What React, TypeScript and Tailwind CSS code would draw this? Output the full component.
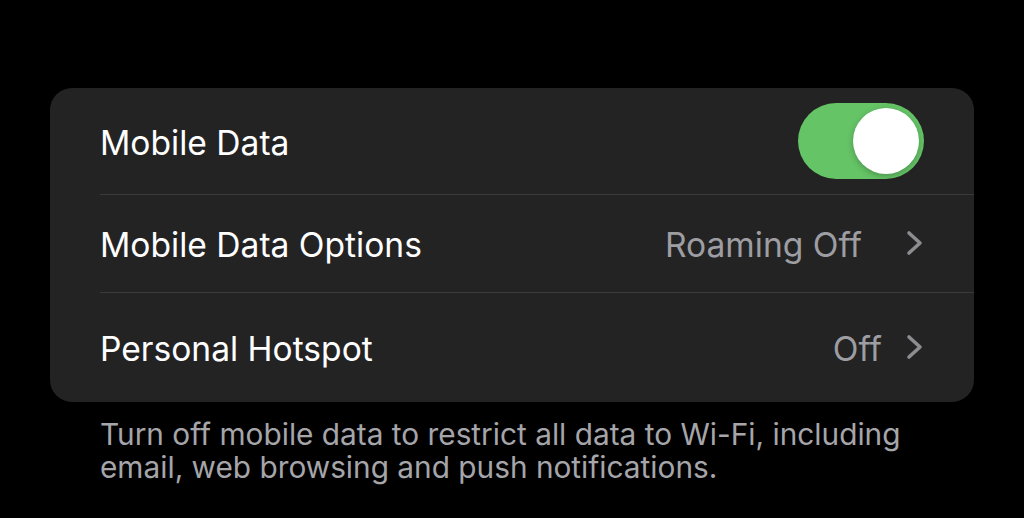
function Toggle({ on }: { on: boolean }) {
  return (
    <div className={on ? "w-[126px] h-[76px] rounded-full bg-[#65c466] p-[5px] flex justify-end" : "w-[126px] h-[76px] rounded-full bg-[#39393d] p-[5px] flex justify-start"}>
      <div className="w-[66px] h-[66px] rounded-full bg-white shadow-[0_2px_6px_rgba(0,0,0,0.25)]" />
    </div>
  );
}

function Chevron() {
  return (
    <svg width="18" height="26" viewBox="0 0 18 26" fill="none" className="text-[#8c8c91]">
      <path d="M3 3 L14 13 L3 23" stroke="currentColor" strokeWidth="3.6" strokeLinecap="round" strokeLinejoin="round" />
    </svg>
  );
}

function Row({ label, value, children, h, gap, last }: { label: string; value?: string; children?: React.ReactNode; h: string; gap?: string; last?: boolean }) {
  return (
    <div className="pl-[50px]">
      <div className={`flex items-center justify-between pr-[50px] ${h} ${last ? "" : "border-b border-[#3a3a3c]"}`}>
        <span className="text-white text-[33.6px] pt-[4px]">{label}</span>
        {children ?? (
          <div className={`flex items-center ${gap}`}>
            <span className="text-[#9d9da2] text-[33.6px] pt-[4px]">{value}</span>
            <Chevron />
          </div>
        )}
      </div>
    </div>
  );
}

export default function App() {
  return (
    <div className="w-[1024px] h-[518px] bg-black pt-[88px] px-[50px] overflow-hidden" style={{ fontFamily: 'Inter, "Noto Sans", sans-serif' }}>
      <div className="bg-[#232324] rounded-[22px]">
        <Row label="Mobile Data" h="h-[107px]">
          <Toggle on />
        </Row>
        <Row label="Mobile Data Options" value="Roaming Off" h="h-[98px]" gap="gap-[44px]" />
        <Row label="Personal Hotspot" value="Off" h="h-[109px]" gap="gap-[24px]" last />
      </div>
      <p className="px-[50px] pt-[16px] text-[29.8px] leading-[33px] text-[#a5a5aa]">
        Turn off mobile data to restrict all data to Wi-Fi, including email, web browsing and push notifications.
      </p>
    </div>
  );
}
